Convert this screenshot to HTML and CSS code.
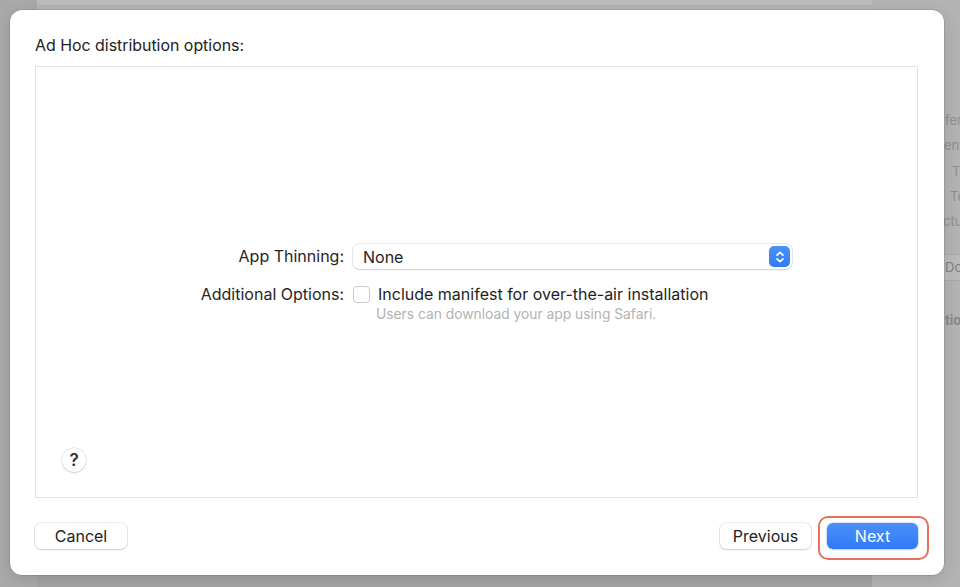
FILE: index.html
```html
<!DOCTYPE html>
<html>
<head>
<meta charset="utf-8">
<link rel="stylesheet" href="styles.css">
</head>
<body>
<div class="backdrop">
  <div class="bd-left"></div>
  <div class="bd-mid">
    <div class="bd-mid-top"></div>
    <div class="bd-mid-body"></div>
    <div class="bd-mid-bottom"></div>
  </div>
  <div class="bd-right">
    <div class="bd-line l1">fer</div>
    <div class="bd-line l2">ent</div>
    <div class="bd-line l3">T</div>
    <div class="bd-line l4">Te</div>
    <div class="bd-line l5">ctu</div>
    <div class="bd-bar"><span class="l6">Do</span></div>
    <div class="bd-line l7">tio</div>
  </div>
</div>

<div class="dialog">
  <div class="title">Ad Hoc distribution options:</div>
  <div class="panel">
    <div class="form">
      <div class="label row1">App Thinning:</div>
      <div class="select">
        <span class="select-value">None</span>
        <span class="stepper">
          <svg width="10" height="14" viewBox="0 0 10 14"><path d="M2 5.2 L5 2.4 L8 5.2" fill="none" stroke="#fff" stroke-width="1.6" stroke-linecap="round" stroke-linejoin="round"/><path d="M2 8.8 L5 11.6 L8 8.8" fill="none" stroke="#fff" stroke-width="1.6" stroke-linecap="round" stroke-linejoin="round"/></svg>
        </span>
      </div>
      <div class="label row2">Additional Options:</div>
      <div class="option">
        <div class="check-row">
          <span class="checkbox"></span>
          <span class="check-text">Include manifest for over-the-air installation</span>
        </div>
        <div class="hint">Users can download your app using Safari.</div>
      </div>
    </div>
    <div class="help-area">
      <span class="help">?</span>
    </div>
  </div>
  <div class="footer">
    <button class="btn">Cancel</button>
    <div class="right-btns">
      <button class="btn">Previous</button>
      <div class="next-wrap">
        <button class="btn primary">Next</button>
        <span class="highlight"></span>
      </div>
    </div>
  </div>
</div>
</body>
</html>
```

FILE: styles.css
```css
* { box-sizing: border-box; }
html, body {
  margin: 0;
  padding: 0;
  width: 960px;
  height: 587px;
  overflow: hidden;
  font-family: Inter, "Helvetica Neue", "Liberation Sans", sans-serif;
  -webkit-font-smoothing: antialiased;
}
body { background: #acacac; position: relative; }

.backdrop {
  display: flex;
  width: 960px;
  height: 587px;
}
.bd-left { width: 37px; background: #a9a9a9; }
.bd-mid {
  width: 835px;
  display: flex;
  flex-direction: column;
  background: #b5b5b5;
}
.bd-mid-top { height: 6px; background: #bcbcbc; border-bottom: 1px solid #adadad; }
.bd-mid-body { flex: 1; }
.bd-mid-bottom { height: 12px; background: #a4a4a4; }
.bd-right {
  flex: 1;
  background: #b3b3b3;
  overflow: hidden;
  padding-top: 111px;
  font-size: 13px;
  color: #8e8e8e;
  white-space: nowrap;
}
.bd-line { height: 25.3px; line-height: 18px; }
.l1 { padding-left: 73px; }
.l2 { padding-left: 72px; }
.l3 { padding-left: 80px; }
.l4 { padding-left: 78px; }
.l5 { padding-left: 71px; }
.bd-bar {
  margin-top: 17px;
  height: 27px;
  border-top: 1px solid #a8a8a8;
  border-bottom: 1px solid #a8a8a8;
  background: #bababa;
  line-height: 25px;
  font-size: 13px;
  color: #7f7f7f;
  margin-bottom: 30px;
}
.l6 { padding-left: 73px; }
.l7 { padding-left: 73px; font-weight: 700; color: #888; font-size: 13px; }

.dialog {
  position: absolute;
  left: 10px;
  top: 10px;
  width: 934px;
  height: 565px;
  background: #fff;
  border-radius: 12px;
  box-shadow: 0 0 0 0.5px rgba(0,0,0,0.18), 0 4px 16px rgba(0,0,0,0.12);
  padding: 0 26px 0 25px;
  display: flex;
  flex-direction: column;
}
.title {
  padding-top: 26px;
  height: 56px;
  font-size: 15.9px;
  line-height: 20px;
  color: #222;
}
.panel {
  height: 432px;
  border: 1px solid #e2e2e2;
  display: flex;
  flex-direction: column;
  padding-top: 49px;
}
.form {
  flex: 1;
  display: grid;
  grid-template-columns: 308px 439px;
  column-gap: 9px;
  row-gap: 15px;
  align-content: center;
  padding-top: 2px;
}
.label {
  text-align: right;
  font-size: 16px;
  color: #262626;
}
.label.row1 { line-height: 25px; }
.label.row2 { line-height: 20px; }
.select {
  height: 25px;
  border-radius: 6px;
  background: #fff;
  box-shadow: 0 0 0 0.5px rgba(0,0,0,0.16), 0 1px 2px rgba(0,0,0,0.12);
  display: flex;
  align-items: center;
  justify-content: space-between;
  padding: 0 2px 0 10px;
}
.select-value { font-size: 16px; color: #1e1e1e; }
.stepper {
  width: 21px;
  height: 21px;
  border-radius: 5px;
  background: linear-gradient(#4b92f9, #2f7cf4);
  display: flex;
  align-items: center;
  justify-content: center;
}
.check-row { display: flex; align-items: center; height: 20px; }
.checkbox {
  width: 17px;
  height: 17px;
  border: 1px solid #c9c9c9;
  border-radius: 4px;
  background: #fff;
  margin-right: 8px;
}
.check-text { font-size: 16px; color: #1e1e1e; }
.hint {
  margin-top: 2px;
  padding-left: 23px;
  font-size: 13.8px;
  line-height: 16px;
  color: #b3b3b3;
}
.help-area {
  height: 49px;
  padding-left: 26px;
}
.help {
  display: flex;
  align-items: center;
  justify-content: center;
  width: 24px;
  height: 24px;
  border-radius: 50%;
  background: #fff;
  box-shadow: 0 0 0 0.5px rgba(0,0,0,0.15), 0 1px 2px rgba(0,0,0,0.14);
  font-size: 17px;
  font-weight: 600;
  color: #333;
}
.footer {
  margin-top: 25px;
  display: flex;
  justify-content: space-between;
  align-items: center;
}
.right-btns { display: flex; gap: 16px; }
.btn {
  font-family: inherit;
  width: 92px;
  height: 26px;
  border: none;
  border-radius: 6px;
  background: #fff;
  box-shadow: 0 0 0 0.5px rgba(0,0,0,0.16), 0 1px 2px rgba(0,0,0,0.14);
  font-size: 16px;
  color: #222;
  padding: 0;
}
.right-btns .btn { width: 91px; }
.btn.primary {
  background: linear-gradient(#4a90f8, #2f7bf5);
  color: #fff;
  box-shadow: 0 0 0 0.5px rgba(0,80,200,0.3), 0 1px 2px rgba(0,0,0,0.12);
}
.next-wrap { position: relative; display: flex; }
.highlight {
  position: absolute;
  left: -9px;
  top: -7px;
  width: 111px;
  height: 44px;
  border: 2.5px solid #e8705c;
  border-radius: 10px;
  pointer-events: none;
}
```
